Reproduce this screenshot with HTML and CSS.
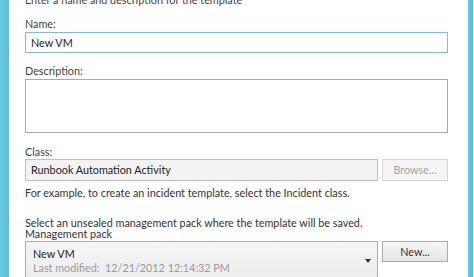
FILE: index.html
```html
<!DOCTYPE html>
<html>
<head>
<meta charset="utf-8">
<link rel="stylesheet" href="styles.css">
</head>
<body>
<div class="page">
  <div class="strip strip-left"></div>
  <div class="content">
    <div class="text header">Enter a name and description for the template</div>
    <div class="text label label-name">Name:</div>
    <div class="field field-name">New VM</div>
    <div class="text label label-desc">Description:</div>
    <div class="field field-desc"></div>
    <div class="text label label-class">Class:</div>
    <div class="row row-class">
      <div class="field field-class">Runbook Automation Activity</div>
      <div class="btn btn-disabled">Browse...</div>
    </div>
    <div class="text hint">For example, to create an incident template, select the Incident class.</div>
    <div class="text select-text">Select an unsealed management pack where the template will be saved.</div>
    <div class="text label-mp">Management pack</div>
    <div class="row row-mp">
      <div class="combo">
        <div class="combo-title">New VM</div>
        <div class="combo-sub">Last modified:&nbsp; 12/21/2012 12:14:32 PM</div>
        <span class="combo-arrow"></span>
      </div>
      <div class="btn btn-new">New...</div>
    </div>
  </div>
  <div class="strip strip-right"></div>
  <div class="edge"></div>
</div>
</body>
</html>
```
FILE: styles.css
```css
html, body {
  margin: 0;
  padding: 0;
  background: #ffffff;
}
body {
  font-family: Lato, "Open Sans", sans-serif;
  font-size: 10.8px;
  color: #2b2b2b;
}
.page {
  display: flex;
  width: 474px;
  height: 277px;
  overflow: hidden;
}
.strip {
  flex: none;
  background: linear-gradient(to right, #6cc8e6, #55bde0);
}
.strip-left { width: 9px; }
.strip-right { width: 5px; }
.edge { width: 1px; flex: none; background: #eef8fb; }
.content {
  flex: 1;
  min-width: 0;
  padding: 0 20px 0 16px;
}
.text {
  line-height: 12px;
  white-space: nowrap;
  color: #333;
}
.header { margin-top: -6px; color: #444; }
.label { color: #444; }
.label-name { margin-top: 12px; }
.field {
  box-sizing: border-box;
  border: 1px solid #ababab;
  background: #fff;
  padding: 0 5px;
  line-height: 19px;
  color: #222;
}
.field-name {
  margin-top: 2px;
  height: 21px;
  border-color: #7ec2cf;
}
.label-desc { margin-top: 12px; }
.field-desc {
  margin-top: 2px;
  height: 54px;
  border-color: #a9a9a9;
}
.label-class { margin-top: 13px; }
.row {
  display: flex;
  gap: 4px;
}
.row-class { margin-top: 1px; height: 22px; }
.field-class {
  flex: 1;
  background: #f3f3f3;
  border-color: #c0c0c0;
  height: 22px;
  line-height: 20px;
}
.btn {
  flex: none;
  box-sizing: border-box;
  width: 66px;
  text-align: center;
  border: 1px solid #acacac;
}
.btn-disabled {
  height: 22px;
  line-height: 20px;
  background: #f5f5f5;
  border-color: #d5d5d5;
  color: #a2a2a2;
}
.hint { margin-top: 6px; }
.select-text { margin-top: 18px; line-height: 11px; }
.label-mp { line-height: 12px; }
.row-mp { margin-top: 1px; align-items: flex-start; }
.combo {
  flex: 1;
  position: relative;
  box-sizing: border-box;
  height: 40px;
  border: 1px solid #acacac;
  background: linear-gradient(#f6f6f6, #ececec);
  padding: 5px 7px;
}
.combo-title { line-height: 14px; color: #222; }
.combo-sub { line-height: 14px; color: #9b9b9b; }
.combo-arrow {
  position: absolute;
  right: 6px;
  top: 17px;
  width: 0;
  height: 0;
  border-left: 3px solid transparent;
  border-right: 3px solid transparent;
  border-top: 4px solid #333;
}
.btn-new {
  height: 21px;
  line-height: 19px;
  background: linear-gradient(#f6f6f6, #e4e4e4);
  color: #333;
}
```
